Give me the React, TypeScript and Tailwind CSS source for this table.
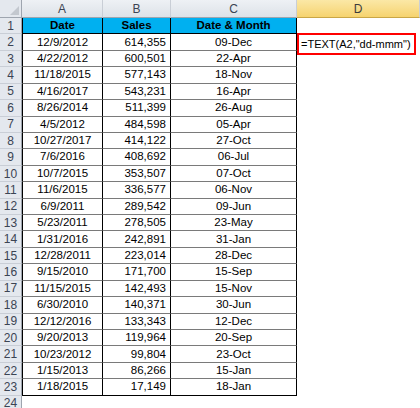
import React from 'react';

const rows: [string, string, string][] = [
  ['12/9/2012', '614,355', '09-Dec'],
  ['4/22/2012', '600,501', '22-Apr'],
  ['11/18/2015', '577,143', '18-Nov'],
  ['4/16/2017', '543,231', '16-Apr'],
  ['8/26/2014', '511,399', '26-Aug'],
  ['4/5/2012', '484,598', '05-Apr'],
  ['10/27/2017', '414,122', '27-Oct'],
  ['7/6/2016', '408,692', '06-Jul'],
  ['10/7/2015', '353,507', '07-Oct'],
  ['11/6/2015', '336,577', '06-Nov'],
  ['6/9/2011', '289,542', '09-Jun'],
  ['5/23/2011', '278,505', '23-May'],
  ['1/31/2016', '242,891', '31-Jan'],
  ['12/28/2011', '223,014', '28-Dec'],
  ['9/15/2010', '171,700', '15-Sep'],
  ['11/15/2015', '142,493', '15-Nov'],
  ['6/30/2010', '140,371', '30-Jun'],
  ['12/12/2016', '133,343', '12-Dec'],
  ['9/20/2013', '119,964', '20-Sep'],
  ['10/23/2012', '99,804', '23-Oct'],
  ['1/15/2013', '86,266', '15-Jan'],
  ['1/18/2015', '17,149', '18-Jan'],
];

const rowH = 'h-[16.43px]';

function RowNum({ n }: { n: number }) {
  return (
    <div className={`${rowH} flex items-center justify-center border-b border-r border-b-[#c9ced6] border-r-[#9ea5af] bg-[#e4e8ee] text-[12px] text-[#3b4453]`}>
      {n}
    </div>
  );
}

function ColHead({ label, selected }: { label: string; selected?: boolean }) {
  return (
    <div
      className={`h-[18px] flex items-center justify-center border-b border-r border-r-[#c9ced6] text-[12px] ${
        selected
          ? 'bg-gradient-to-b from-[#fbe8a6] to-[#f6d36e] border-b-[#c9a646] text-[#3b3b3b]'
          : 'bg-gradient-to-b from-[#eef1f5] to-[#dde2e8] border-b-[#9ea5af] text-[#3b4453]'
      }`}
    >
      {label}
    </div>
  );
}

export default function App() {
  return (
    <div className="relative w-[420px] h-[408px] overflow-hidden bg-white font-['Liberation_Sans',Arial,sans-serif] text-black">
      <div className="grid grid-cols-[22px_81px_68px_126px_123px]">
        {/* corner */}
        <div className="relative h-[18px] border-b border-r border-b-[#9ea5af] border-r-[#9ea5af] bg-[#e4e8ee]">
          <div className="absolute right-[2px] bottom-[2px] w-0 h-0 border-l-[9px] border-l-transparent border-b-[9px] border-b-[#c3c8cf]" />
        </div>
        <ColHead label="A" />
        <ColHead label="B" />
        <ColHead label="C" />
        <ColHead label="D" selected />

        {/* header row 1 */}
        <RowNum n={1} />
        <div className={`${rowH} flex items-center justify-center border-l border-r border-b border-black bg-[#00b0f0] text-[11.5px] font-bold`}>Date</div>
        <div className={`${rowH} flex items-center justify-center border-r border-b border-black bg-[#00b0f0] text-[11.5px] font-bold`}>Sales</div>
        <div className={`${rowH} flex items-center justify-center border-r border-b border-black bg-[#00b0f0] text-[11.5px] font-bold`}>Date &amp; Month</div>
        <div className={rowH} />

        {rows.map(([d, s, m], i) => {
          const last = i === rows.length - 1;
          const bb = last ? 'border-b-black' : 'border-b-[#7a7a7a]';
          return (
            <React.Fragment key={i}>
              <RowNum n={i + 2} />
              <div className={`${rowH} flex items-center justify-center border-l border-r border-b border-l-black border-r-black ${bb} text-[11.5px]`}>{d}</div>
              <div className={`${rowH} flex items-center justify-end pr-[4px] border-r border-b border-r-black ${bb} text-[11.5px]`}>{s}</div>
              <div className={`${rowH} flex items-center justify-center border-r border-b border-r-black ${bb} text-[11.5px]`}>{m}</div>
              <div className={rowH} />
            </React.Fragment>
          );
        })}

        <RowNum n={24} />
        <div className={rowH} />
        <div className={rowH} />
        <div className={rowH} />
        <div className={rowH} />
      </div>

      {/* formula callout */}
      <div className="absolute left-[297px] top-[33px] w-[119px] h-[22px] border-[2.5px] border-[#ff0000] bg-white flex items-center pl-[2px] text-[11px] whitespace-nowrap">
        =TEXT(A2,"dd-mmm")
      </div>
    </div>
  );
}
